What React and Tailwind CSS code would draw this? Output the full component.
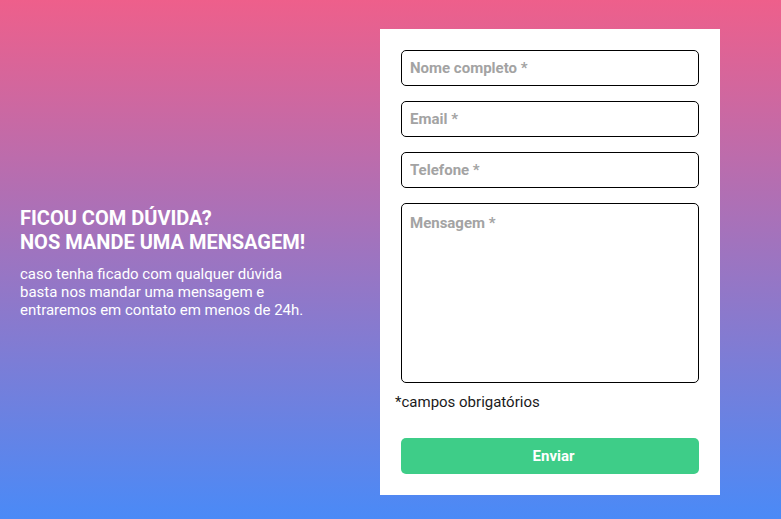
export default function App() {
  const fields = ['Nome completo *', 'Email *', 'Telefone *'];

  return (
    <div
      className="w-full h-[519px] pt-[5px] flex items-center bg-[linear-gradient(to_bottom,#ee5f8b,#4a8af7)]"
      style={{ fontFamily: 'Roboto, "Liberation Sans", sans-serif' }}
    >
      <div className="w-[380px] pl-5 text-white">
        <h1 className="text-[20px] leading-[24px] font-bold uppercase m-0">
          Ficou com dúvida?
          <br />
          Nos mande uma mensagem!
        </h1>
        <p className="mt-[11px] text-[15px] leading-[18px]">
          caso tenha ficado com qualquer dúvida
          <br />
          basta nos mandar uma mensagem e
          <br />
          entraremos em contato em menos de 24h.
        </p>
      </div>

      <form className="w-[340px] h-[466px] bg-white px-[21px] pt-[21px] flex flex-col">
        {fields.map(f => (
          <input
            key={f}
            placeholder={f}
            className="w-full h-[36px] mb-[15px] border border-black rounded-[5px] px-[8px] text-[15px] font-bold outline-none placeholder:text-[#a3a3a3]"
          />
        ))}
        <textarea
          placeholder="Mensagem *"
          className="w-full h-[180px] border border-black rounded-[5px] px-[8px] pt-[8px] text-[15px] font-bold outline-none resize-none placeholder:text-[#a3a3a3]"
        />
        <div className="mt-[10px] -ml-[6px] text-[15px] leading-[18px] text-[#1a1a1a]">*campos obrigatórios</div>
        <button
          type="button"
          className="mt-[27px] w-full h-[36px] pl-[7px] rounded-[5px] bg-[#3ecd88] text-white text-[15px] font-bold"
        >
          Enviar
        </button>
      </form>
    </div>
  );
}
